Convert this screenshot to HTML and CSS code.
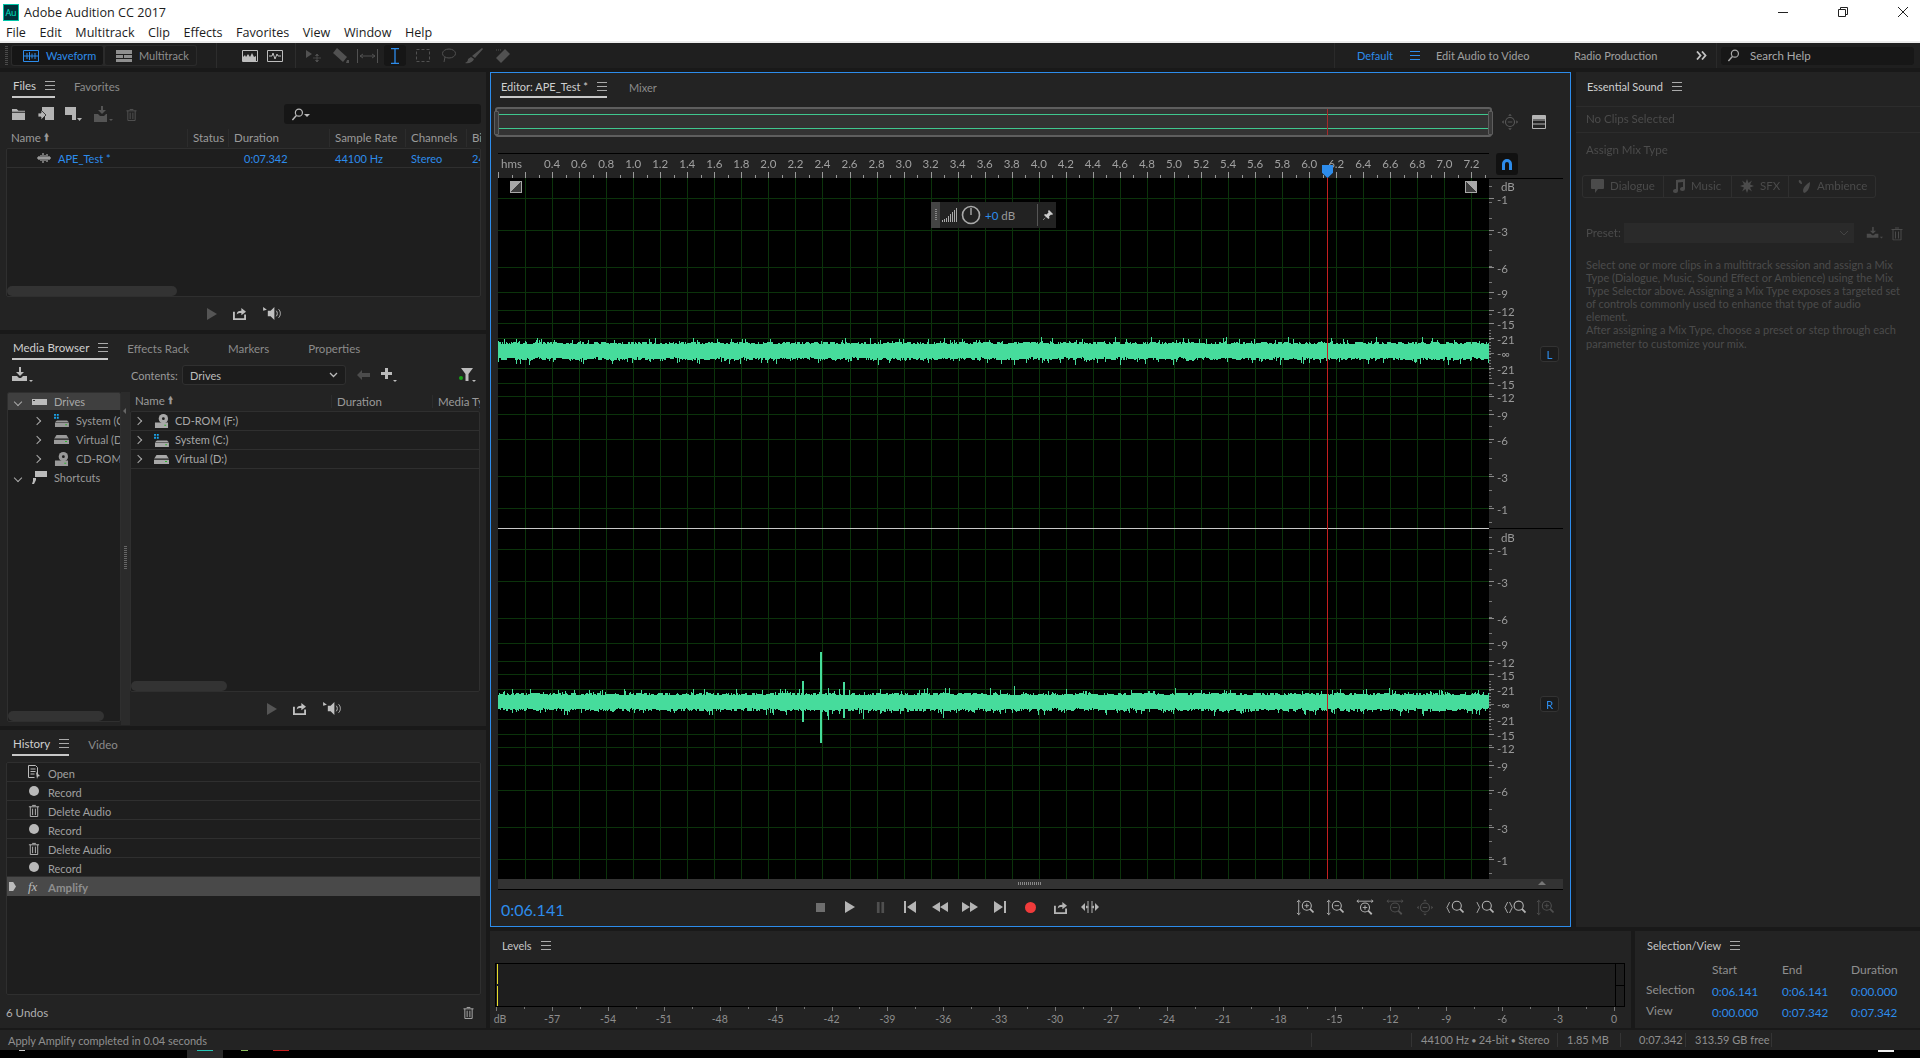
FILE: index.html
```html
<!DOCTYPE html>
<html lang="en">
<head>
    <meta charset="UTF-8">
    <title>Adobe Audition CC 2017</title>
    <link rel="stylesheet" href="styles.css">
</head>
<body>
    <svg class="icon-defs" xmlns="http://www.w3.org/2000/svg">
        <symbol id="i-menu" viewBox="0 0 10 9"><path d="M0 .5h10M0 4.500h10M0 8.500h10" stroke="currentColor" fill="none"/></symbol>
        <symbol id="i-folder" viewBox="0 0 16 14"><path d="M1 1h5l2 2h7v1H1zM1 5h14v8H1z" fill="currentColor"/></symbol>
        <symbol id="i-import" viewBox="0 0 18 16"><path d="M5 1h12v13H8V9L5 6z" fill="currentColor"/><path d="M4 4l5 5-5 5v-3H1V7h3z" fill="currentColor" stroke="#232323" stroke-width=".8"/></symbol>
        <symbol id="i-new" viewBox="0 0 18 16"><path d="M1 1h11v13H8V9H1z" fill="currentColor"/><path d="M13 12h5l-2.500 3z" fill="currentColor"/></symbol>
        <symbol id="i-insert" viewBox="0 0 20 16"><path d="M8 0h2v4h3l-4 4-4-4h3zM1 8h4l2 2h4l2-2h1v8H1z" fill="currentColor"/><path d="M16 13h4l-2 2z" fill="currentColor"/></symbol>
        <symbol id="i-trash" viewBox="0 0 12 14"><path d="M4 1.500h4M.5 3h11M2 3v10.500h8V3M4.500 5v7M7.500 5v7" stroke="currentColor" fill="none"/></symbol>
        <symbol id="i-search" viewBox="0 0 14 14"><circle cx="8.500" cy="5" r="3.800" stroke="currentColor" fill="none" stroke-width="1.300"/><path d="M5.800 8L1.500 13" stroke="currentColor" stroke-width="1.500"/></symbol>
        <symbol id="i-play" viewBox="0 0 10 12"><path d="M0 0l10 6-10 6z" fill="currentColor"/></symbol>
        <symbol id="i-export" viewBox="0 0 16 14"><path d="M2 5v8h12V8" stroke="currentColor" stroke-width="2" fill="none"/><path d="M5 8c0-3 2-4 5-4V1l5 4-5 4V6.500C8 6.500 6 7 5 8z" fill="currentColor"/></symbol>
        <symbol id="i-speaker" viewBox="0 0 22 16"><path d="M1 1l4 3-4 1zM6 5h3l4-4v14l-4-4H6z" fill="currentColor"/><path d="M15 5c1.500 1.500 1.500 4.500 0 6M17.500 3.500c2.500 2.500 2.500 6.500 0 9" stroke="currentColor" fill="none"/></symbol>
        <symbol id="i-down" viewBox="0 0 22 16"><path d="M8 0h2v5h3l-4 4-4-4h3zM1 9h5l2 2h2l2-2h4v5H1z" fill="currentColor"/><path d="M18 13h4l-2 2z" fill="currentColor"/></symbol>
        <symbol id="i-drive" viewBox="0 0 15 9"><path d="M2.500 0h10L15 4H0z" fill="currentColor"/><path d="M0 4.500h15V9H0z" fill="currentColor"/><path d="M0 4h15" stroke="#1e1e1e"/><path d="M11 6h2v1h-2z" fill="#2db52d"/></symbol>
        <symbol id="i-windrive" viewBox="0 0 16 14"><path d="M0 0h2v2H0zM3 0h2v2H3zM0 3h2v2H0zM3 3h2v2H3z" fill="#1aa8f0"/><path d="M3 7h11l2 2H1z M1 9.500h15V14H1z" fill="currentColor"/><path d="M12 11h2v1h-2z" fill="#2db52d"/></symbol>
        <symbol id="i-cd" viewBox="0 0 16 15"><path d="M1 9h14v6H1z" fill="currentColor"/><path d="M11 11.500h2v1h-2z" fill="#2db52d"/><circle cx="10" cy="5" r="5" fill="currentColor"/><circle cx="10" cy="5" r="1.500" fill="#1e1e1e"/></symbol>
        <symbol id="i-waveform" viewBox="0 0 14 10"><path d="M0 5h14M2 3v4M4 2v6M6 0v10M8 2v6M10 1v8M12 3v4" stroke="currentColor" fill="none"/></symbol>
        <symbol id="i-stop" viewBox="0 0 10 12"><path d="M0 1h10v10H0z" fill="currentColor"/></symbol>
        <symbol id="i-pause" viewBox="0 0 10 12"><path d="M1 0h3v12H1zM6 0h3v12H6z" fill="currentColor"/></symbol>
        <symbol id="i-prev" viewBox="0 0 12 12"><path d="M0 0h2v12H0zM12 0v12L3 6z" fill="currentColor"/></symbol>
        <symbol id="i-next" viewBox="0 0 12 12"><path d="M10 0h2v12h-2zM0 0v12l9-6z" fill="currentColor"/></symbol>
        <symbol id="i-rew" viewBox="0 0 16 10"><path d="M8 0v10L0 5zM16 0v10L8 5z" fill="currentColor"/></symbol>
        <symbol id="i-ff" viewBox="0 0 16 10"><path d="M0 0v10l8-5zM8 0v10l8-5z" fill="currentColor"/></symbol>
        <symbol id="i-skip" viewBox="0 0 18 12"><path d="M0 6l4-4v8zM18 6l-4-4v8z" fill="currentColor"/><path d="M7 0v12M11 0v12" stroke="currentColor"/><path d="M5 4.500l3 1.500-3 1.500zM13 4.500L10 6l3 1.500z" fill="currentColor"/></symbol>
        <symbol id="i-zoom-v-in" viewBox="0 0 20 18"><path d="M3 1v16M1 3l2-2 2 2M1 15l2 2 2-2" stroke="currentColor" fill="none"/><circle cx="12" cy="7" r="5" stroke="currentColor" fill="none" stroke-width="1.200"/><path d="M15.500 10.500l4 4" stroke="currentColor" stroke-width="2"/><path d="M9.500 7h5M12 4.500v5" stroke="currentColor"/></symbol>
        <symbol id="i-zoom-v-out" viewBox="0 0 20 18"><path d="M3 1v16M1 3l2-2 2 2M1 15l2 2 2-2" stroke="currentColor" fill="none"/><circle cx="12" cy="7" r="5" stroke="currentColor" fill="none" stroke-width="1.200"/><path d="M15.500 10.500l4 4" stroke="currentColor" stroke-width="2"/><path d="M9.500 7h5" stroke="currentColor"/></symbol>
        <symbol id="i-zoom-h-in" viewBox="0 0 20 18"><path d="M1 2h18M3 .5L1 2l2 1.500M17 .5L19 2l-2 1.500" stroke="currentColor" fill="none"/><circle cx="10" cy="9" r="5" stroke="currentColor" fill="none" stroke-width="1.200"/><path d="M13.500 12.500l4 4" stroke="currentColor" stroke-width="2"/><path d="M7.500 9h5M10 6.500v5" stroke="currentColor"/></symbol>
        <symbol id="i-zoom-h-out" viewBox="0 0 20 18"><path d="M1 2h18M3 .5L1 2l2 1.500M17 .5L19 2l-2 1.500" stroke="currentColor" fill="none"/><circle cx="10" cy="9" r="5" stroke="currentColor" fill="none" stroke-width="1.200"/><path d="M13.500 12.500l4 4" stroke="currentColor" stroke-width="2"/><path d="M7.500 9h5" stroke="currentColor"/></symbol>
        <symbol id="i-zoom-all" viewBox="0 0 20 18"><path d="M10 0l2 2H8zM10 18l2-2H8zM1 9l2-2v4zM19 9l-2-2v4z" fill="currentColor"/><circle cx="10" cy="9" r="5" stroke="currentColor" fill="none" stroke-width="1.200"/><path d="M7.500 9h5" stroke="currentColor"/></symbol>
        <symbol id="i-zoom-l" viewBox="0 0 20 18"><path d="M4 3L1 9l3 6" stroke="currentColor" fill="none"/><circle cx="12" cy="7" r="5" stroke="currentColor" fill="none" stroke-width="1.200"/><path d="M15.500 10.500l4 4" stroke="currentColor" stroke-width="2"/></symbol>
        <symbol id="i-zoom-r" viewBox="0 0 20 18"><path d="M1 3l3 6-3 6" stroke="currentColor" fill="none"/><circle cx="12" cy="7" r="5" stroke="currentColor" fill="none" stroke-width="1.200"/><path d="M15.500 10.500l4 4" stroke="currentColor" stroke-width="2"/></symbol>
        <symbol id="i-zoom-lr" viewBox="0 0 24 18"><path d="M4 3L1 9l3 6M6 3l3 6-3 6" stroke="currentColor" fill="none"/><circle cx="16" cy="7" r="5" stroke="currentColor" fill="none" stroke-width="1.200"/><path d="M19.500 10.500l4 4" stroke="currentColor" stroke-width="2"/></symbol>
    </svg>

    <header class="titlebar">
        <div class="title-row">
            <span class="app-logo">Au</span>
            <span class="app-title">Adobe Audition CC 2017</span>
            <div class="win-buttons">
                <svg width="10" height="10" viewBox="0 0 10 10"><path d="M0 5.500h10" stroke="#222"/></svg>
                <svg width="10" height="10" viewBox="0 0 10 10"><path d="M.5 2.500h7v7h-7zM2.500 2.500v-2h7v7h-2" stroke="#222" fill="none"/></svg>
                <svg width="10" height="10" viewBox="0 0 10 10"><path d="M0 0l10 10M10 0L0 10" stroke="#222"/></svg>
            </div>
        </div>
        <nav class="menubar">
            <span>File</span><span>Edit</span><span>Multitrack</span><span>Clip</span><span>Effects</span><span>Favorites</span><span>View</span><span>Window</span><span>Help</span>
        </nav>
    </header>

    <div class="toolbar">
        <div class="grip"></div>
        <div class="mode-group">
            <div class="mode-btn active">
                <svg width="16" height="12" viewBox="0 0 16 12"><path d="M.5.500h15v11H.5zM1 6h14M4 3v6M6.500 2v8M9 3.500v5M12 3v6" stroke="currentColor" fill="none"/></svg>
                Waveform
            </div>
            <div class="mode-btn">
                <svg width="16" height="12" viewBox="0 0 16 12"><path d="M0 0h16v4H0zM0 5h7v3H0zM0 9h16v3H0zM8 5h8v3H8z" fill="currentColor"/></svg>
                Multitrack
            </div>
        </div>
        <div class="tool-sep first"></div>
        <svg class="tool bright" width="16" height="12" viewBox="0 0 16 12"><path d="M.5.500h15v11H.5z" stroke="currentColor" fill="none"/><path d="M1 11V7l2-2 1 2 2-3 2 3 2-4 2 4 2-1v5z" fill="currentColor"/></svg>
        <svg class="tool bright gap-9" width="16" height="12" viewBox="0 0 16 12"><path d="M.5.500h15v11H.5z" stroke="currentColor" fill="none"/><path d="M2 6h3l1-3 2 6 2-5 1 2h3" stroke="currentColor" fill="none"/></svg>
        <div class="tool-sep second"></div>
        <svg class="tool" width="16" height="14" viewBox="0 0 16 14"><path d="M0 1l6 4-6 4z" fill="currentColor"/><path d="M11 5v8M7 9h8M11 5l-1.500 1.500h3zM11 13l-1.500-1.500h3z" stroke="currentColor" fill="currentColor" stroke-width=".8"/></svg>
        <svg class="tool gap-11" width="16" height="15" viewBox="0 0 16 15"><path d="M4 0l10 9-4 5L0 5z" fill="currentColor"/><path d="M14 12h2v3h-3z" fill="currentColor"/></svg>
        <svg class="tool gap-8" width="21" height="14" viewBox="0 0 21 14"><path d="M.5 0v14M20.500 0v14M3 7h15M6 5L3 7l3 2M15 5l3 2-3 2" stroke="currentColor" fill="none"/></svg>
        <div class="tool-active">
            <svg width="10" height="16" viewBox="0 0 10 16"><path d="M1 .5h8M1 15.500h8M5 .5v15" stroke="#2d8ceb" stroke-width="1.300" fill="none"/></svg>
        </div>
        <svg class="tool gap-10" width="14" height="13" viewBox="0 0 14 13"><path d="M.5.500h13v12H.5z" stroke="currentColor" fill="none" stroke-dasharray="3 2"/></svg>
        <svg class="tool gap-11" width="15" height="15" viewBox="0 0 15 15"><ellipse cx="8" cy="5.500" rx="6.500" ry="4.500" stroke="currentColor" fill="none"/><path d="M4 9l-1 5" stroke="currentColor"/></svg>
        <svg class="tool gap-9" width="18" height="16" viewBox="0 0 18 16"><path d="M17 0l1 1-8 9-3-2zM6 9l3 2c-1 3-5 5-9 4 2-1 3-2 3-4z" fill="currentColor"/></svg>
        <svg class="tool gap-11" width="16" height="15" viewBox="0 0 16 15"><path d="M11 1l5 5-9 9-5-5z" fill="currentColor"/><path d="M2 2l5 0" stroke="currentColor" stroke-dasharray="1 1"/></svg>

        <div class="workspaces">
            <span class="ws-item current">Default</span>
            <svg class="burger blue" width="10" height="9"><use href="#i-menu"/></svg>
            <span class="ws-item edit">Edit Audio to Video</span>
            <span class="ws-item radio">Radio Production</span>
            <svg class="ws-more" width="11" height="9" viewBox="0 0 11 9"><path d="M1 .5l3.500 4L1 8.500M6 .5l3.500 4L6 8.500" stroke="#c4c4c4" stroke-width="1.800" fill="none"/></svg>
        </div>
        <div class="help-search">
            <svg width="13" height="13"><use href="#i-search"/></svg>
            <span>Search Help</span>
        </div>
    </div>

    <main class="workspace">
        <section class="left-column">
            <div class="panel files-panel">
                <div class="tabs">
                    <span class="tab active">Files <svg class="burger" width="10" height="9"><use href="#i-menu"/></svg></span>
                    <span class="tab">Favorites</span>
                </div>
                <div class="files-tools">
                    <svg class="ti" width="15" height="13"><use href="#i-folder"/></svg>
                    <svg class="ti" width="18" height="16"><use href="#i-import"/></svg>
                    <svg class="ti" width="18" height="16"><use href="#i-new"/></svg>
                    <svg class="ti dim" width="20" height="16"><use href="#i-insert"/></svg>
                    <svg class="ti dim" width="11" height="13"><use href="#i-trash"/></svg>
                    <div class="panel-search">
                        <svg width="13" height="13"><use href="#i-search"/></svg><span class="caret-small"></span>
                    </div>
                </div>
                <div class="file-cols file-head">
                    <span>Name <b class="sort">&#129049;</b></span><span>Status</span><span>Duration</span><span>Sample Rate</span><span>Channels</span><span>Bi</span>
                </div>
                <div class="list-box files-list">
                    <div class="file-cols file-row">
                        <span class="file-name"><svg width="14" height="10"><use href="#i-waveform"/></svg>APE_Test *</span>
                        <span></span><span class="pad-dur">0:07.342</span><span>44100 Hz</span><span>Stereo</span><span>24</span>
                    </div>
                    <div class="hscroll files-scroll"></div>
                </div>
                <div class="mini-transport">
                    <svg class="dim" width="10" height="12"><use href="#i-play"/></svg>
                    <svg width="15" height="13"><use href="#i-export"/></svg>
                    <svg width="21" height="15"><use href="#i-speaker"/></svg>
                </div>
            </div>

            <div class="panel media-panel">
                <div class="tabs">
                    <span class="tab active">Media Browser <svg class="burger" width="10" height="9"><use href="#i-menu"/></svg></span>
                    <span class="tab">Effects Rack</span>
                    <span class="tab">Markers</span>
                    <span class="tab">Properties</span>
                </div>
                <div class="media-tools">
                    <svg class="ti-down" width="22" height="16"><use href="#i-down"/></svg>
                    <span class="contents-label">Contents:</span>
                    <div class="contents-select">Drives<svg width="9" height="6" viewBox="0 0 9 6"><path d="M1 1l3.500 3.500L8 1" stroke="#bbb" stroke-width="1.300" fill="none"/></svg></div>
                    <svg class="back" width="13" height="10" viewBox="0 0 13 10"><path d="M0 5l5-5v3h8v4H5v3z" fill="#4c4c4c"/></svg>
                    <svg class="plus" width="16" height="15" viewBox="0 0 16 15"><path d="M4 0h3v4h4v3H7v4H4V7H0V4h4zM12 12h4l-2 2z" fill="#bbb"/></svg>
                    <svg class="filter" width="17" height="15" viewBox="0 0 17 15"><path d="M2 0h12L9.500 6v7h-3V6z" fill="#bbb"/><circle cx="2" cy="10" r="2" fill="#17a117"/><path d="M13 12h4l-2 2z" fill="#bbb"/></svg>
                </div>
                <div class="media-body">
                    <div class="list-box tree">
                        <div class="tree-row selected"><i class="chev open"></i><svg width="15" height="6" viewBox="0 0 15 6"><path d="M0 0h15v6H0z" fill="#bbb"/><path d="M1 1h2v1H1z" fill="#333"/></svg><span>Drives</span></div>
                        <div class="tree-row child"><i class="chev"></i><svg width="15" height="13"><use href="#i-windrive"/></svg><span>System (C:)</span></div>
                        <div class="tree-row child"><i class="chev"></i><svg width="15" height="9"><use href="#i-drive"/></svg><span>Virtual (D:)</span></div>
                        <div class="tree-row child"><i class="chev"></i><svg width="15" height="14"><use href="#i-cd"/></svg><span>CD-ROM (F:)</span></div>
                        <div class="tree-row"><i class="chev open"></i><svg width="15" height="13" viewBox="0 0 15 13"><path d="M3 0h12v6H3zM1 7h3v2L2 13H0l1-3z" fill="#bbb"/></svg><span>Shortcuts</span></div>
                        <div class="hscroll tree-scroll"></div>
                    </div>
                    <div class="splitter"><i class="collapse"></i><i class="grip-dots"></i></div>
                    <div class="browser">
                        <div class="browser-cols browser-head"><span>Name <b class="sort">&#129049;</b></span><span>Duration</span><span>Media Ty</span></div>
                        <div class="list-box browser-list">
                            <div class="browser-row"><i class="chev"></i><svg width="15" height="14"><use href="#i-cd"/></svg><span>CD-ROM (F:)</span></div>
                            <div class="browser-row"><i class="chev"></i><svg width="15" height="13"><use href="#i-windrive"/></svg><span>System (C:)</span></div>
                            <div class="browser-row"><i class="chev"></i><svg width="15" height="9"><use href="#i-drive"/></svg><span>Virtual (D:)</span></div>
                            <div class="hscroll browser-scroll"></div>
                        </div>
                        <div class="mini-transport media-transport">
                            <svg class="dim" width="10" height="12"><use href="#i-play"/></svg>
                            <svg width="15" height="13"><use href="#i-export"/></svg>
                            <svg width="21" height="15"><use href="#i-speaker"/></svg>
                        </div>
                    </div>
                </div>
            </div>

            <div class="panel history-panel">
                <div class="tabs">
                    <span class="tab active">History <svg class="burger" width="10" height="9"><use href="#i-menu"/></svg></span>
                    <span class="tab">Video</span>
                </div>
                <div class="list-box history-list">
                    <div class="history-row"><svg class="doc" width="12" height="14" viewBox="0 0 12 14"><path d="M.5.500h7l2 2v7M.5.500v12h6M2.500 4h5M2.500 6.500h5M2.500 9h4" stroke="currentColor" fill="none"/><path d="M8 7l4 4-2 .5L9 14z" fill="currentColor"/></svg><span>Open</span></div>
                    <div class="history-row"><i class="dot"></i><span>Record</span></div>
                    <div class="history-row"><svg width="11" height="13"><use href="#i-trash"/></svg><span>Delete Audio</span></div>
                    <div class="history-row"><i class="dot"></i><span>Record</span></div>
                    <div class="history-row"><svg width="11" height="13"><use href="#i-trash"/></svg><span>Delete Audio</span></div>
                    <div class="history-row"><i class="dot"></i><span>Record</span></div>
                    <div class="history-row current"><i class="marker"></i><em class="fx">fx</em><span>Amplify</span></div>
                </div>
                <div class="history-foot">
                    <span>6 Undos</span>
                    <svg width="11" height="13"><use href="#i-trash"/></svg>
                </div>
            </div>
        </section>

        <section class="right-column">
            <div class="top-row">
                <div class="panel editor-panel">
                    <div class="tabs">
                        <span class="tab active">Editor: APE_Test * <svg class="burger" width="10" height="9"><use href="#i-menu"/></svg></span>
                        <span class="tab">Mixer</span>
                    </div>
                    <div class="overview-row">
                        <div class="overview"><i class="ov-line a"></i><i class="ov-line b"></i><i class="ov-head"></i></div>
                        <svg class="ov-zoom" width="18" height="20" viewBox="0 0 20 18"><use href="#i-zoom-all"/></svg>
                        <svg class="ov-list" width="14" height="14" viewBox="0 0 14 14"><path d="M.5.500h13v13H.5zM1 5h12M1 9h12" stroke="#b4b4b4" fill="none"/><path d="M1 1h12v3H1z" fill="#b4b4b4"/></svg>
                    </div>
                    <div class="ruler-row">
                        <div class="time-ruler" id="timeRuler"><canvas id="timeTicks" width="991" height="25"></canvas><span class="hms">hms</span></div>
                        <div class="magnet"><svg width="12" height="13" viewBox="0 0 12 13"><path d="M1 12V6a5 5 0 0 1 10 0v6H8V6a2 2 0 0 0-4 0v6z" fill="#2d8ceb"/></svg></div>
                    </div>
                    <div class="track-area">
                        <div class="wave-view">
                            <canvas id="waveCanvas" width="991" height="701"></canvas>
                            <i class="corner left"></i>
                            <i class="corner right"></i>
                            <div class="hud">
                                <i class="hud-grip"></i>
                                <svg width="15" height="14" viewBox="0 0 15 14"><path d="M.5 14v-2M2.500 14v-3M4.500 14v-4M6.500 14V8M8.500 14V6M10.500 14V4M12.500 14V2M14.500 14V0" stroke="#aaa" fill="none"/></svg>
                                <svg class="knob" width="20" height="20" viewBox="0 0 20 20"><circle cx="10" cy="10" r="8.500" stroke="#aaa" stroke-width="1.600" fill="none"/><path d="M10 3v7" stroke="#aaa" stroke-width="1.400"/></svg>
                                <span class="hud-val"><b>+0</b> dB</span>
                                <i class="hud-sep"></i>
                                <svg width="10" height="10" viewBox="0 0 10 10"><path d="M6 0l4 4-1 1-1-.5-2 2 .5 1.500-1 1L3 7 .5 10 0 9.500 3 7 1 5l1-1 1.500.5 2-2L5 1z" fill="#ccc"/></svg>
                            </div>
                            <i class="playhead"></i>
                        </div>
                        <div class="db-ruler" id="dbRuler">
                            <canvas id="dbTicks" width="12" height="701"></canvas>
                            <span class="chan-tag" id="tagL">L</span>
                            <span class="chan-tag" id="tagR">R</span>
                        </div>
                        <div class="track-scroll"><i class="grip-h"></i><i class="tri-up"></i></div>
                    </div>
                    <div class="transport">
                        <span class="timecode">0:06.141</span>
                        <div class="t-btn dim2"><svg width="9" height="11"><use href="#i-stop"/></svg></div>
                        <div class="t-btn"><svg width="10" height="12"><use href="#i-play"/></svg></div>
                        <div class="t-btn dim"><svg width="9" height="11"><use href="#i-pause"/></svg></div>
                        <div class="t-btn"><svg width="12" height="12"><use href="#i-prev"/></svg></div>
                        <div class="t-btn"><svg width="16" height="10"><use href="#i-rew"/></svg></div>
                        <div class="t-btn"><svg width="16" height="10"><use href="#i-ff"/></svg></div>
                        <div class="t-btn"><svg width="12" height="12"><use href="#i-next"/></svg></div>
                        <div class="t-btn"><i class="rec"></i></div>
                        <div class="t-btn"><svg width="15" height="13"><use href="#i-export"/></svg></div>
                        <div class="t-btn"><svg width="18" height="12"><use href="#i-skip"/></svg></div>
                        <div class="zoom-group">
                            <div class="t-btn"><svg width="18" height="17"><use href="#i-zoom-v-in"/></svg></div>
                            <div class="t-btn"><svg width="18" height="17"><use href="#i-zoom-v-out"/></svg></div>
                            <div class="t-btn"><svg width="18" height="17"><use href="#i-zoom-h-in"/></svg></div>
                            <div class="t-btn dim"><svg width="18" height="17"><use href="#i-zoom-h-out"/></svg></div>
                            <div class="t-btn dim"><svg width="18" height="17"><use href="#i-zoom-all"/></svg></div>
                            <div class="t-btn"><svg width="18" height="17"><use href="#i-zoom-l"/></svg></div>
                            <div class="t-btn"><svg width="18" height="17"><use href="#i-zoom-r"/></svg></div>
                            <div class="t-btn"><svg width="22" height="17"><use href="#i-zoom-lr"/></svg></div>
                            <div class="t-btn dim"><svg width="18" height="17"><use href="#i-zoom-v-in"/></svg></div>
                        </div>
                    </div>
                </div>

                <div class="panel essential-panel">
                    <div class="es-title"><span>Essential Sound</span><svg class="burger" width="10" height="9"><use href="#i-menu"/></svg></div>
                    <div class="es-noclip">No Clips Selected</div>
                    <div class="es-assign">Assign Mix Type</div>
                    <div class="es-types">
                        <div class="es-type w-dialog"><svg width="13" height="14" viewBox="0 0 13 14"><path d="M1 0h11a1 1 0 0 1 1 1v8a1 1 0 0 1-1 1H7l-3 4v-4H1a1 1 0 0 1-1-1V1a1 1 0 0 1 1-1z" fill="currentColor"/></svg>Dialogue</div>
                        <div class="es-type w-music"><svg width="13" height="14" viewBox="0 0 13 14"><path d="M4 1l9-1v10a2.500 2 0 1 1-2-2V3L6 3.500V12a2.500 2 0 1 1-2-2z" fill="currentColor"/></svg>Music</div>
                        <div class="es-type w-sfx"><svg width="14" height="14" viewBox="0 0 14 14"><path d="M7 0l1.500 4L12 1.500 10 5.500l4 1.500-4 1.500 2 4L8.500 10 7 14l-1.500-4L2 12.500l2-4L0 7l4-1.500-2-4L5.500 4z" fill="currentColor"/></svg>SFX</div>
                        <div class="es-type w-amb"><svg width="14" height="14" viewBox="0 0 14 14"><path d="M2 1c2 0 3 2 3 4C3 5 1 3 2 1zM13 3c0 5-2 10-6 11-2-2-1-7 6-11z" fill="currentColor"/></svg>Ambience</div>
                    </div>
                    <div class="es-preset">
                        <span class="preset-label">Preset:</span>
                        <div class="es-select"><svg width="8" height="5" viewBox="0 0 8 5"><path d="M0 0l4 4 4-4" stroke="#444" fill="none"/></svg></div>
                        <svg width="17" height="14" viewBox="0 0 22 16"><use href="#i-down"/></svg>
                        <svg width="12" height="15" viewBox="0 0 12 14"><use href="#i-trash"/></svg>
                    </div>
                    <p class="es-help">Select one or more clips in a multitrack session and assign a Mix Type (Dialogue, Music, Sound Effect or Ambience) using the Mix Type Selector above. Assigning a Mix Type exposes a targeted set of controls commonly used to enhance that type of audio<br>element.<br>After assigning a Mix Type, choose a preset or step through each parameter to customize your mix.</p>
                </div>
            </div>

            <div class="bottom-row">
                <div class="panel levels-panel">
                    <div class="small-title"><span>Levels</span><svg class="burger" width="10" height="9"><use href="#i-menu"/></svg></div>
                    <div class="meter"><i class="meter-peak a"></i><i class="meter-peak b"></i><i class="meter-mid"></i><i class="meter-end"></i></div>
                    <div class="meter-scale" id="meterScale"><canvas id="meterTicks" width="1130" height="4"></canvas></div>
                </div>
                <div class="panel selection-panel">
                    <div class="small-title"><span>Selection/View</span><svg class="burger" width="10" height="9"><use href="#i-menu"/></svg></div>
                    <div class="sel-grid">
                        <span></span><span class="head">Start</span><span class="head">End</span><span class="head">Duration</span>
                        <span class="lab">Selection</span><span class="val">0:06.141</span><span class="val">0:06.141</span><span class="val">0:00.000</span>
                        <span class="lab">View</span><span class="val">0:00.000</span><span class="val">0:07.342</span><span class="val">0:07.342</span>
                    </div>
                </div>
            </div>
        </section>
    </main>

    <footer class="statusbar">
        <span class="status-msg">Apply Amplify completed in 0.04 seconds</span>
        <i class="st-cell c50"></i>
        <i class="st-cell c100"></i>
        <span class="st-cell c146">44100 Hz <b>&#9679;</b> 24-bit <b>&#9679;</b> Stereo</span>
        <span class="st-cell c63">1.85 MB</span>
        <span class="st-cell c65 right">0:07.342</span>
        <span class="st-cell c86">313.59 GB free</span>
    </footer>
    <div class="taskbar">
        <i class="tb-white first"></i>
        <i class="tb-active"><i class="tb-teal"></i></i>
        <i class="tb-green"></i>
        <i class="tb-red"></i>
        <i class="tb-white last"></i>
    </div>

    <script src="script.js"></script>
</body>
</html>
```
FILE: styles.css
```css
:root {
    --panel: #232323;
    --well: #1e1e1e;
    --gap: #191919;
    --line: #2f2f2f;
    --text: #9a9a9a;
    --text-hi: #cfcfcf;
    --blue: #2d8ceb;
    --icon: #b4b4b4;
    --ghost: #4b4b4b;
}

html, body {
    margin: 0;
    height: 1058px;
    overflow: hidden;
}

body {
    background: var(--gap);
    color: var(--text);
    font: 11px 'Lato', 'Noto Sans', sans-serif;
}

.icon-defs { display: none; }
svg { display: block; flex: none; }
i { display: block; font-style: normal; }

/* title + menu */
.titlebar {
    height: 41px;
    background: #fff;
    border-bottom: 2px solid #ececec;
    color: #1c1c1c;
    font-family: 'Open Sans', sans-serif;
}

.title-row {
    height: 24px;
    display: flex;
    align-items: center;
}

.app-logo {
    width: 14px;
    height: 15px;
    margin-left: 3px;
    background: #00323a;
    border: 1px solid #00c4a8;
    color: #00e4c4;
    font-size: 9px;
    line-height: 15px;
    text-align: center;
}

.app-title { margin-left: 5px; font-size: 12.6px; }

.win-buttons {
    margin-left: auto;
    display: flex;
    gap: 50px;
    padding-right: 12px;
}

.menubar {
    display: flex;
    gap: 13.5px;
    padding-left: 6px;
    height: 17px;
    line-height: 17px;
    font-size: 12.6px;
}

/* main toolbar */
.toolbar {
    height: 25px;
    margin-bottom: 4px;
    background: #1f1f1f;
    display: flex;
    align-items: center;
    color: #5a5a5a;
}

.grip {
    width: 3px;
    height: 20px;
    margin-left: 5px;
    background: repeating-linear-gradient(#4a4a4a 0 1px, transparent 1px 2px);
}

.mode-group {
    display: flex;
    margin-left: 3px;
    height: 21px;
    background: #2b2b2b;
    border-radius: 3px;
}

.mode-btn {
    display: flex;
    align-items: center;
    gap: 7px;
    padding-left: 11px;
    width: 80px;
    color: #8f8f8f;
    border: 1px solid #2b2b2b;
    border-radius: 3px;
    background: var(--well);
}

.mode-btn.active { color: var(--blue); background: #161616; }

.tool-sep { width: 1px; height: 25px; background: #2d2d2d; }
.tool-sep.first { margin: 0 25px 0 19px; }
.tool-sep.second { margin: 0 10px 0 12px; }

.tool { color: #515151; }
.tool.bright { color: #bdbdbd; }
.gap-8 { margin-left: 8px; }
.gap-9 { margin-left: 9px; }
.gap-10 { margin-left: 10px; }
.gap-11 { margin-left: 11px; }

.tool-active {
    width: 22px;
    height: 21px;
    margin-left: 6px;
    background: #161616;
    border-radius: 3px;
    display: flex;
    align-items: center;
    justify-content: center;
}

.workspaces {
    margin-left: auto;
    width: 383px;
    height: 100%;
    padding-left: 22px;
    box-sizing: border-box;
    border-left: 1px solid #2a2a2a;
    border-right: 1px solid #2a2a2a;
    display: flex;
    align-items: center;
    color: #a0a0a0;
}

.ws-item { white-space: nowrap; }
.ws-item.current { color: var(--blue); width: 53px; }
.ws-item.edit { width: 138px; }
.ws-item.radio { width: 122px; }
.burger { color: #aaa; }
.burger.blue { color: var(--blue); margin-right: 16px; }

.help-search {
    width: 193px;
    height: 18px;
    margin: 0 6px 0 4px;
    background: #171717;
    border-radius: 3px;
    display: flex;
    align-items: center;
    gap: 10px;
    padding-left: 6px;
    box-sizing: border-box;
    color: #aaa;
    font-size: 11.5px;
}

/* panels */
.workspace {
    display: flex;
    gap: 4px;
    height: 956px;
}

.left-column {
    width: 486px;
    display: flex;
    flex-direction: column;
    gap: 4px;
}

.right-column {
    flex: 1;
    display: flex;
    flex-direction: column;
    gap: 4px;
}

.panel { background: var(--panel); position: relative; }

.tabs {
    display: flex;
    height: 27px;
    padding-left: 12px;
    box-sizing: border-box;
    font-size: 11.5px;
}

.tab {
    display: flex;
    align-items: center;
    gap: 9px;
    height: 26px;
    padding: 3px 2px 0 1px;
    margin-right: 36px;
    box-sizing: border-box;
    color: #8b8b8b;
}

.tab.active {
    color: var(--text-hi);
    border-bottom: 2px solid #c8c8c8;
    margin-right: 18px;
    padding-right: 0;
}

.list-box {
    background: var(--well);
    border: 1px solid var(--line);
    border-radius: 2px;
    position: relative;
    box-sizing: border-box;
    overflow: hidden;
}

.hscroll {
    position: absolute;
    bottom: 0;
    left: 0;
    height: 10px;
    background: #333;
    border-radius: 5px;
}

.ti { color: var(--icon); }
.dim { color: #555; }
.dim2 { color: #707070; }

/* files */
.files-panel { height: 258px; }

.files-tools {
    display: flex;
    align-items: center;
    height: 24px;
    margin-top: 3px;
    padding-left: 11px;
}

.files-tools .ti:nth-child(2) { margin-left: 11px; }
.files-tools .ti:nth-child(3) { margin-left: 9px; }
.files-tools .ti:nth-child(4) { margin-left: 11px; }
.files-tools .ti:nth-child(5) { margin-left: 13px; }

.panel-search {
    width: 197px;
    height: 20px;
    margin-left: auto;
    margin-right: 5px;
    background: #161616;
    border-radius: 3px;
    display: flex;
    align-items: center;
    padding-left: 7px;
    box-sizing: border-box;
    color: #bbb;
}

.caret-small {
    border: 3px solid transparent;
    border-top-color: #bbb;
    margin-top: 6px;
}

.file-cols {
    display: grid;
    grid-template-columns: 181px 41px 101px 76px 61px 1fr;
    white-space: nowrap;
    overflow: hidden;
}

.file-head {
    height: 22px;
    padding-top: 1px;
    box-sizing: border-box;
    margin: 0 5px 0 6px;
    align-items: center;
    font-size: 11.5px;
}

.file-head span {
    padding-left: 5px;
    border-left: 1px solid #2c2c2c;
    line-height: 18px;
}

.file-head span:first-child { border-left: none; }
.sort { font: 700 10px 'DejaVu Sans', sans-serif; color: #999; vertical-align: 1px; }

.files-list { height: 149px; margin: 0 5px 0 6px; }

.file-row {
    height: 18px;
    border-bottom: 1px solid var(--line);
    align-items: center;
    color: var(--blue);
}

.file-row span { padding-left: 5px; }

.file-row .file-name {
    display: flex;
    align-items: center;
    gap: 7px;
    padding-left: 30px;
}

.file-name svg { color: #c4c4c4; }
.file-row .pad-dur { padding-left: 15px; }
.files-scroll { width: 170px; }

.mini-transport {
    display: flex;
    align-items: center;
    justify-content: center;
    height: 33px;
    gap: 15px;
    padding-left: 4px;
    color: #c0c0c0;
}

.mini-transport .dim { color: #555; }

/* media browser */
.media-panel { height: 394px; }

.media-tools {
    display: flex;
    align-items: center;
    height: 28px;
    padding-left: 11px;
    color: #bbb;
}

.contents-label { margin-left: 98px; width: 47px; color: var(--text); flex: none; }

.contents-select {
    width: 164px;
    height: 20px;
    margin-left: 4px;
    padding: 0 7px;
    box-sizing: border-box;
    background: #1c1c1c;
    border: 1px solid #303030;
    border-radius: 3px;
    display: flex;
    align-items: center;
    justify-content: space-between;
    color: #bdbdbd;
}

.back { margin-left: 11px; }
.plus { margin-left: 11px; }
.filter { margin-left: 62px; }

.media-body {
    display: flex;
    height: 333px;
    margin-top: 3px;
    padding-left: 7px;
}

.tree { width: 114px; height: 330px; }

.tree-row {
    display: flex;
    align-items: center;
    height: 19px;
    white-space: nowrap;
}

.tree-row svg { margin-left: 11px; }
.tree-row span { margin: -1px 0 0 7px; }
.tree-row.selected { background: #3f3f3f; height: 17px; margin-bottom: 1px; color: #a8a8a8; }
.tree-row.child { padding-left: 17px; }
.tree-row.child svg { margin-left: 14px; }

.chev {
    width: 5px;
    height: 5px;
    margin-left: 9px;
    border-right: 1.5px solid #aaa;
    border-bottom: 1.5px solid #aaa;
    transform: rotate(-45deg);
    flex: none;
}

.chev.open { transform: rotate(45deg); margin-left: 7px; }
.tree-scroll { width: 96px; }

.splitter {
    width: 9px;
    height: 333px;
    background: #2b2b2b;
    position: relative;
}

.collapse {
    position: absolute;
    top: 16px;
    left: 2px;
    border: 3px solid transparent;
    border-right-color: #666;
    border-left: none;
}

.grip-dots {
    position: absolute;
    top: 154px;
    left: 3px;
    width: 3px;
    height: 24px;
    background: repeating-linear-gradient(#666 0 1px, transparent 1px 2px);
}

.browser { width: 350px; }

.browser-cols {
    display: grid;
    grid-template-columns: 201px 101px 1fr;
    height: 19px;
    padding-bottom: 1px;
    box-sizing: border-box;
    align-items: center;
    white-space: nowrap;
    overflow: hidden;
    font-size: 11.5px;
}

.browser-cols span { padding-left: 5px; border-left: 1px solid #2c2c2c; }
.browser-cols span:first-child { border-left: none; }

.browser-list { height: 281px; }

.browser-row {
    display: flex;
    align-items: center;
    height: 19px;
    border-bottom: 1px solid var(--line);
    box-sizing: border-box;
    color: #a8a8a8;
}

.browser-row .chev { margin-left: 4px; }
.browser-row svg { margin-left: 13px; }
.browser-row span { margin: -1px 0 0 6px; }
.browser-scroll { width: 96px; }

.mini-transport.media-transport { padding-left: 0; }

/* history */
.history-panel { flex: 1; }

.history-list { height: 233px; margin: 5px 5px 0 6px; }

.history-row {
    display: flex;
    align-items: center;
    height: 19px;
    border-bottom: 1px solid var(--line);
    box-sizing: border-box;
    padding-left: 21px;
    gap: 8px;
    color: #a0a0a0;
}

.history-row span { padding-top: 2px; }
.history-row svg { width: 12px; color: #bbb; }

.dot {
    width: 10px;
    height: 10px;
    margin: 0 1px;
    border-radius: 50%;
    background: #b8b8b8;
}

.history-row.current {
    background: #494949;
    border-bottom: none;
    position: relative;
    font-weight: 700;
    font-size: 11.5px;
    color: #8e8e8e;
}

.marker {
    position: absolute;
    left: 2px;
    top: 5px;
    width: 7px;
    height: 9px;
    background: #bbb;
    clip-path: polygon(0 0, 60% 0, 100% 50%, 60% 100%, 0 100%);
}

.fx {
    width: 12px;
    color: #bbb;
    font: italic 13px 'Liberation Serif', serif;
}

.history-foot {
    display: flex;
    align-items: center;
    justify-content: space-between;
    height: 33px;
    padding: 2px 12px 0 6px;
    box-sizing: border-box;
    color: #b0b0b0;
    font-size: 11.5px;
}

/* editor */
.top-row { display: flex; gap: 5px; height: 855px; }

.editor-panel {
    width: 1081px;
    border: 1px solid var(--blue);
    box-sizing: border-box;
}

.editor-panel .tabs { padding-left: 9px; height: 26px; font-size: 11px; }
.editor-panel .tab { height: 25px; }
.editor-panel .tab.active { margin-right: 21px; }

.overview-row {
    display: flex;
    align-items: center;
    height: 30px;
    margin: 8px 0 0 4px;
}

.overview {
    width: 997px;
    height: 30px;
    background: #333;
    border: 2px solid #5e5e5e;
    border-radius: 3px;
    box-sizing: border-box;
    position: relative;
}

.overview::before, .overview::after {
    content: "";
    position: absolute;
    top: 2px;
    width: 3px;
    height: 22px;
    border: 1px solid #5e5e5e;
    background: #3a3a3a;
    border-radius: 1px;
}

.overview::before { left: -3px; }
.overview::after { right: -3px; }

.ov-line {
    position: absolute;
    left: 2px;
    right: 2px;
    height: 1px;
    background: #3fc78e;
}

.ov-line.a { top: 5px; }
.ov-line.b { top: 19px; }

.ov-head {
    position: absolute;
    left: 830px;
    top: 0;
    width: 1px;
    height: 26px;
    background: #a52a2a;
}

.ov-zoom { margin-left: 9px; color: #5a5a5a; }
.ov-list { margin-left: 13px; }

.ruler-row {
    display: flex;
    height: 25px;
    margin: 16px 0 0 7px;
}

.time-ruler {
    width: 991px;
    height: 25px;
    position: relative;
    color: #a0a0a0;
    font-size: 11.5px;
    line-height: 20px;
}

.time-ruler canvas { display: block; }
.time-ruler span { position: absolute; top: 1px; transform: translateX(-50%); }
.time-ruler .hms { left: 3px; transform: none; }

.magnet {
    width: 22px;
    height: 22px;
    margin-left: 7px;
    background: #111;
    border-radius: 3px;
    display: flex;
    align-items: center;
    justify-content: center;
}

.track-area {
    display: grid;
    grid-template-columns: 991px 74px;
    grid-template-rows: 701px 10px;
    margin-left: 7px;
    width: 1065px;
    box-sizing: border-box;
    border-right: 1px solid #000;
    border-bottom: 1px solid #000;
}

.wave-view { position: relative; background: #000; }
#waveCanvas { display: block; }

.corner {
    position: absolute;
    top: 3px;
    width: 12px;
    height: 12px;
    box-sizing: border-box;
    border: 1px solid #a8a8a8;
}

.corner.left { left: 12px; background: linear-gradient(to bottom right, #a8a8a8 50%, #3c3c3c 50%); }
.corner.right { left: 967px; background: linear-gradient(to bottom left, #a8a8a8 50%, #3c3c3c 50%); }

.playhead {
    position: absolute;
    left: 829px;
    top: 0;
    width: 1px;
    height: 701px;
    background: #c41f1f;
}

.playhead::before {
    content: "";
    position: absolute;
    left: -5px;
    top: -13px;
    width: 11px;
    height: 13px;
    background: var(--blue);
    clip-path: polygon(0 0, 100% 0, 100% 60%, 50% 100%, 0 60%);
}

.hud {
    position: absolute;
    left: 433px;
    top: 24px;
    width: 125px;
    height: 26px;
    background: #222;
    display: flex;
    align-items: center;
    color: #999;
    font-size: 11.5px;
}

.hud-grip {
    width: 9px;
    height: 26px;
    background: #444 repeating-linear-gradient(#888 0 1px, transparent 1px 2px) center / 2px 12px no-repeat;
}

.hud > svg:nth-child(2) { margin-left: 2px; }
.knob { margin-left: 4px; }
.hud-val { margin-left: 4px; width: 52px; }
.hud-val b { color: var(--blue); font-weight: 400; }
.hud-sep { width: 1px; height: 22px; background: #555; margin-right: 5px; }

.db-ruler {
    position: relative;
    background: var(--panel);
    box-shadow: inset 0 1px #000;
    color: #9a9a9a;
    font-size: 11.5px;
}

.db-ruler canvas { display: block; position: absolute; left: 0; top: 0; }
.db-ruler span { position: absolute; line-height: 13px; white-space: nowrap; }

.db-ruler .db-sep {
    left: 0;
    right: 0;
    top: 350px;
    height: 1px;
    background: #000;
}

.db-ruler .chan-tag {
    left: 51px;
    width: 19px;
    height: 16px;
    line-height: 16px;
    text-align: center;
    color: var(--blue);
    background: #1c1c1c;
    border: 1px solid #333;
    border-radius: 3px;
    box-sizing: border-box;
}

#tagL { top: 168px; }
#tagR { top: 518px; }

.track-scroll {
    grid-column: 1 / 3;
    background: #333;
    position: relative;
}

.grip-h {
    position: absolute;
    left: 520px;
    top: 3px;
    width: 24px;
    height: 3px;
    background: repeating-linear-gradient(90deg, #888 0 1px, transparent 1px 2px);
}

.tri-up {
    position: absolute;
    left: 1040px;
    top: 2px;
    border: 4px solid transparent;
    border-bottom-color: #777;
    border-top: none;
}

.transport {
    display: flex;
    align-items: center;
    height: 36px;
    color: #b4b4b4;
}

.timecode {
    width: 314px;
    padding-left: 10px;
    box-sizing: border-box;
    color: var(--blue);
    font-size: 16px;
    margin-top: 3px;
}

.t-btn {
    width: 30px;
    height: 20px;
    display: flex;
    align-items: center;
    justify-content: center;
    margin-bottom: 2px;
}

.t-btn.dim { color: #4f4f4f; }
.t-btn.dim2 { color: #6e6e6e; }

.rec {
    width: 11px;
    height: 11px;
    border-radius: 50%;
    background: #f03b3b;
}

.zoom-group { display: flex; margin-left: 185px; }

/* essential sound */
.essential-panel {
    flex: 1;
    color: var(--ghost);
    padding-left: 10px;
    font-size: 11.5px;
}

.es-title {
    display: flex;
    align-items: center;
    gap: 9px;
    height: 34px;
    margin-left: 1px;
    padding-bottom: 6px;
    box-sizing: border-box;
    color: #cfcfcf;
    font-size: 11px;
}

.es-noclip {
    margin-left: -10px;
    padding-left: 10px;
    height: 25px;
    line-height: 23px;
    border-top: 1px solid #2c2c2c;
    border-bottom: 1px solid #2c2c2c;
}

.es-assign { margin-top: 9px; height: 33px; line-height: 16px; }

.es-types {
    display: flex;
    width: 294px;
    height: 23px;
    margin-left: -4px;
    border: 1px solid #2f2f2f;
    border-radius: 3px;
    box-sizing: border-box;
}

.es-type {
    display: flex;
    align-items: center;
    gap: 6px;
    padding: 0 0 2px 8px;
    box-sizing: border-box;
    border-right: 1px solid #2f2f2f;
}

.es-type:last-child { border-right: none; }
.w-dialog { width: 81px; }
.w-music { width: 68px; }
.w-sfx { width: 57px; }
.w-amb { width: 86px; }

.es-preset {
    display: flex;
    align-items: center;
    height: 20px;
    margin-top: 25px;
}

.preset-label { width: 33px; flex: none; margin-top: -2px; }

.es-select {
    width: 230px;
    height: 20px;
    margin: 0 12px 0 5px;
    background: #2a2a2a;
    display: flex;
    align-items: center;
    justify-content: flex-end;
    padding-right: 6px;
    box-sizing: border-box;
}

.es-preset svg:last-child { margin-left: 8px; }

.es-help {
    width: 322px;
    margin: 15px 0 0;
    font-size: 11px;
    line-height: 13.1px;
}

/* bottom */
.bottom-row { display: flex; gap: 4px; height: 97px; }
.levels-panel { width: 1141px; }
.selection-panel { flex: 1; }

.small-title {
    display: flex;
    align-items: center;
    gap: 9px;
    height: 28px;
    padding-left: 12px;
    color: #c6c6c6;
}

.meter {
    position: relative;
    width: 1130px;
    height: 44px;
    margin: 4px 0 0 5px;
    background: var(--well);
    border: 1px solid #000;
    box-sizing: border-box;
}

.meter-peak {
    position: absolute;
    left: 1px;
    width: 1px;
    height: 20px;
    background: #e8dd2a;
}

.meter-peak.a { top: 0; }
.meter-peak.b { top: 22px; }

.meter-mid {
    position: absolute;
    left: 1119px;
    right: 0;
    top: 21px;
    height: 1px;
    background: #000;
}

.meter-end {
    position: absolute;
    left: 1119px;
    top: 0;
    width: 1px;
    height: 42px;
    background: #000;
}

.meter-scale {
    position: relative;
    margin-left: 5px;
    height: 21px;
    font-size: 10.5px;
    color: #8d8d8d;
}

.meter-scale canvas { display: block; }
.meter-scale span { position: absolute; top: 6px; transform: translateX(-50%); }

.sel-grid {
    display: grid;
    grid-template-columns: 66px 70px 69px 1fr;
    grid-template-rows: 21px 21px 21px;
    padding-left: 11px;
    align-items: center;
    font-size: 12px;
}

.sel-grid .head { color: #8f8f8f; }
.sel-grid .lab { color: #8f8f8f; margin-top: -3px; }
.sel-grid .val { color: var(--blue); font-size: 11.7px; }

/* status */
.statusbar {
    height: 20px;
    margin-top: 2px;
    background: var(--panel);
    display: flex;
    align-items: center;
    color: #8f8f8f;
}

.status-msg { width: 1262px; padding-left: 8px; box-sizing: border-box; }

.st-cell {
    height: 14px;
    line-height: 14px;
    border-right: 1px solid #343434;
    box-sizing: border-box;
    white-space: nowrap;
    padding-left: 9px;
}

.st-cell b { font-size: 7px; vertical-align: 1px; color: #8f8f8f; }
.c50 { width: 50px; }
.c100 { width: 100px; }
.c146 { width: 146px; }
.c63 { width: 63px; }
.c65 { width: 65px; padding-left: 18px; }
.c86 { width: 86px; }

.taskbar {
    height: 8px;
    background: #000;
    display: flex;
    position: relative;
}

.tb-active { width: 36px; height: 8px; margin-left: 187px; background: #2a2a2a; padding-left: 10px; box-sizing: border-box; }
.tb-teal { width: 16px; height: 1px; background: #26c6b8; }
.tb-green { width: 7px; height: 1px; margin-left: 18px; background: #8fbf5f; }
.tb-red { width: 16px; height: 1px; margin-left: 25px; background: #c81e1e; }
.tb-white.first { width: 6px; height: 1px; position: absolute; left: 19px; background: #ccc; }
.tb-white.last { width: 16px; height: 2px; position: absolute; left: 1878px; background: #eee; }
```
FILE: script.js
```js
const PX_PER_SEC = 135.2;
const CHANNEL_H = 350;
const VIEW_W = 991;

// simple seeded random so each run gives the same wave
let seed = 12345;
function rnd() {
    seed = (seed * 16807) % 2147483647;
    return seed / 2147483647;
}

function addLabel(parent, text, left, top) {
    const span = document.createElement('span');
    span.textContent = text;
    span.style.left = left + 'px';
    if (top !== undefined) span.style.top = top + 'px';
    parent.appendChild(span);
}

function drawTimeRuler() {
    const ruler = document.getElementById('timeRuler');
    const ctx = document.getElementById('timeTicks').getContext('2d');
    ctx.fillStyle = '#000';
    ctx.fillRect(0, 0, VIEW_W, 1);
    ctx.fillStyle = '#9a9a9a';
    for (let i = 0; i <= 73; i++) {
        const x = Math.round(i * 0.1 * PX_PER_SEC);
        const major = i % 2 === 0;
        ctx.fillRect(x, major ? 19 : 22, 1, major ? 6 : 3);
    }
    for (let i = 2; i <= 36; i++) {
        addLabel(ruler, (i * 0.2).toFixed(1), i * 0.2 * PX_PER_SEC);
    }
}

// dB positions as offset from the top of a channel
const DB_MARKS = [[-1, 20], [-3, 52], [-6, 89], [-9, 114], [-12, 132], [-15, 145], [-21, 160]];

function dbLines(top) {
    const out = [];
    DB_MARKS.forEach(([db, y]) => {
        out.push({ db, y: top + y });
        out.push({ db, y: top + CHANNEL_H - y });
    });
    return out;
}

function drawDbRuler() {
    const ruler = document.getElementById('dbRuler');
    const ctx = document.getElementById('dbTicks').getContext('2d');
    const sep = document.createElement('span');
    sep.className = 'db-sep';
    ruler.appendChild(sep);

    [0, 351].forEach(top => {
        addLabel(ruler, 'dB', 12, top + 2);
        addLabel(ruler, '-\u221e', 8, top + 169);
        dbLines(top).forEach(m => {
            addLabel(ruler, String(m.db), 8, m.y - 5);
            ctx.fillStyle = '#8a8a8a';
            ctx.fillRect(0, m.y, 5, 1);
        });
        ctx.fillStyle = '#777';
        for (let y = 8; y < CHANNEL_H; y += 16) {
            if (y > 150 && y < 200) continue;
            ctx.fillRect(0, top + y, 3, 1);
        }
        for (let y = 152; y < 200; y += 3) {
            ctx.fillRect(0, top + y, 2, 1);
        }
        ctx.fillRect(0, top + 175, 5, 1);
    });
}

function drawChannel(ctx, center, spikes) {
    ctx.fillStyle = '#46dc9c';
    let up = 7;
    let down = 7;
    for (let x = 0; x < VIEW_W; x++) {
        // the noise moves in small steps so the edge looks blocky, not hairy
        if (rnd() < 0.6) up = 6.5 + rnd() * 3;
        if (rnd() < 0.6) down = 6.5 + rnd() * 3;
        let top = up;
        let bottom = down;
        if (rnd() < 0.1) top += 1 + rnd() * 4;
        if (rnd() < 0.1) bottom += 1 + rnd() * 4;
        ctx.fillRect(x, Math.round(center - top), 1, Math.round(top + bottom));
    }
    spikes.forEach(([x, top, bottom, w]) => {
        ctx.fillRect(x, center - top, w || 1, top + bottom);
    });
}

function drawWave() {
    const ctx = document.getElementById('waveCanvas').getContext('2d');
    ctx.fillStyle = '#000';
    ctx.fillRect(0, 0, VIEW_W, 701);

    // grid
    ctx.fillStyle = '#0b330b';
    for (let i = 1; i <= 36; i++) {
        ctx.fillRect(Math.round(i * 0.2 * PX_PER_SEC), 0, 1, 701);
    }
    [0, 351].forEach(top => {
        dbLines(top).forEach(m => ctx.fillRect(0, m.y, VIEW_W, 1));
        ctx.fillRect(0, top + 175, VIEW_W, 1);
    });

    drawChannel(ctx, 173, []);
    drawChannel(ctx, 524, [
        [322, 50, 41, 2], [304, 21, 20, 2], [345, 20, 16, 2], [330, 14, 18, 1],
        [341, 13, 12, 1], [365, 5, 17, 1], [382, 13, 6, 1], [516, 16, 8, 1], [445, 10, 16, 1]
    ]);

    // centre line between the channels
    ctx.fillStyle = '#c8c8c8';
    ctx.fillRect(0, 350, VIEW_W, 1);
}

function drawMeterScale() {
    const scale = document.getElementById('meterScale');
    const ctx = document.getElementById('meterTicks').getContext('2d');
    const zero = 1119;
    const perDb = 18.63;
    ctx.fillStyle = '#777';
    for (let d = 0; d <= 120; d += 3) {
        // every 3 dB a long tick, halfway a short one
        const db = d / 2;
        ctx.fillRect(Math.round(zero - db * perDb), 0, 1, d % 6 === 0 ? 4 : 2);
    }
    addLabel(scale, 'dB', 5);
    for (let db = 0; db <= 57; db += 3) {
        addLabel(scale, db === 0 ? '0' : '-' + db, zero - db * perDb);
    }
}

drawTimeRuler();
drawDbRuler();
drawWave();
drawMeterScale();
```
